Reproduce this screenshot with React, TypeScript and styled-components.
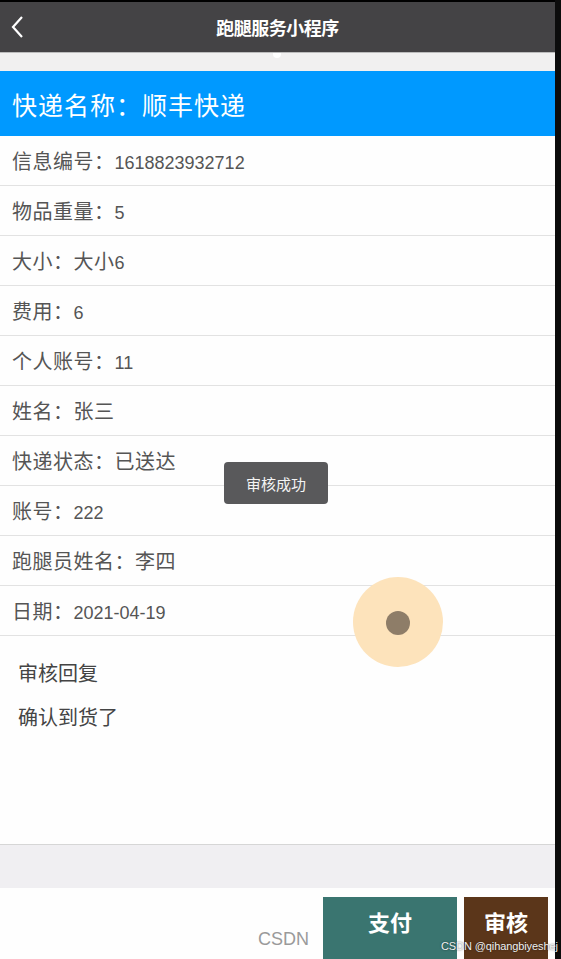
import styled, { createGlobalStyle } from "styled-components";

const GlobalStyle = createGlobalStyle`
  *, *::before, *::after {
    box-sizing: border-box;
  }
  html, body {
    margin: 0;
    padding: 0;
    background: #000;
  }
  body {
    font-family: "Liberation Sans", "Noto Sans CJK SC", sans-serif;
  }
`;

interface InfoItem {
  label: string;
  value: string;
}

const items: InfoItem[] = [
  { label: "信息编号", value: "1618823932712" },
  { label: "物品重量", value: "5" },
  { label: "大小", value: "大小6" },
  { label: "费用", value: "6" },
  { label: "个人账号", value: "11" },
  { label: "姓名", value: "张三" },
  { label: "快递状态", value: "已送达" },
  { label: "账号", value: "222" },
  { label: "跑腿员姓名", value: "李四" },
  { label: "日期", value: "2021-04-19" },
];

// split a string into CJK / latin runs so the two scripts get their own size
const toRuns = (text: string) =>
  text.match(/[\u3000-\u9fff\uff00-\uffef]+|[^\u3000-\u9fff\uff00-\uffef]+/g) ?? [];

const isCjk = (run: string) => /[\u3000-\u9fff\uff00-\uffef]/.test(run);

// --- Styled Components ---
const Screen = styled.div`
  position: relative;
  width: 561px;
  height: 959px;
  overflow: hidden;
  display: flex;
  background: #000;
`;

const Phone = styled.div`
  width: 555px;
  margin-top: 2px;
  display: flex;
  flex-direction: column;
  background: #fefefe;

  & > * {
    flex-shrink: 0;
  }
`;

const NavBar = styled.div`
  height: 51px;
  background: #444345;
  display: flex;
  align-items: center;
  justify-content: center;
  position: relative;
  border-bottom: 1px solid #bcbcbc;
`;

const BackButton = styled.div`
  position: absolute;
  left: 10px;
  top: 13px;
  width: 16px;
  height: 24px;
  display: flex;
`;

const NavTitle = styled.div`
  color: #fff;
  font-size: 18px;
  font-weight: 700;
  letter-spacing: -0.5px;
`;

const Strip = styled.div`
  height: 18px;
  background: #f1f0f0;
  display: flex;
  justify-content: center;
`;

const Dot = styled.div`
  width: 8px;
  height: 5px;
  border-radius: 0 0 4px 4px;
  background: #fff;
  margin-left: -2px;
`;

const Banner = styled.div`
  height: 65px;
  background: #0099ff;
  display: flex;
  align-items: center;
  padding-left: 12px;
  color: #fff;
  font-size: 25px;
  letter-spacing: 1px;
`;

const Row = styled.div`
  height: 50px;
  border-bottom: 1px solid #e2e2e2;
  display: flex;
  align-items: center;
  padding-left: 12px;
  color: #555;
`;

const Run = styled.span<{ $cjk: boolean }>`
  font-size: ${(p) => (p.$cjk ? "20px" : "18px")};
  letter-spacing: ${(p) => (p.$cjk ? "0.5px" : "0")};
`;

const Reply = styled.div`
  height: 209px;
  padding: 22px 18px 0;
  display: flex;
  flex-direction: column;
  gap: 15px;
  border-bottom: 1px solid #d6d6d6;
  font-size: 20px;
  color: #444;
`;

const GrayBand = styled.div`
  height: 43px;
  background: #f0eff2;
`;

const ActionBar = styled.div`
  flex: 1;
  display: flex;
  align-items: flex-start;
  padding-top: 9px;
  background: #fefefe;
`;

const Csdn = styled.div`
  margin-left: 258px;
  margin-top: 32px;
  font-size: 18px;
  color: #9a9a9a;
  width: 65px;
`;

const ActionButton = styled.div<{ $bg: string; $w: number }>`
  width: ${(p) => p.$w}px;
  height: 70px;
  background: ${(p) => p.$bg};
  color: #fff;
  font-size: 22px;
  font-weight: 700;
  display: flex;
  justify-content: center;
  padding-top: 8px;
  margin-right: 7px;
`;

const RightEdge = styled.div`
  width: 6px;
  background: #0c0c0c;
`;

const Toast = styled.div`
  position: absolute;
  left: 224px;
  top: 462px;
  width: 104px;
  height: 42px;
  border-radius: 4px;
  background: #59595b;
  color: #f4f4f4;
  font-size: 15px;
  display: flex;
  align-items: center;
  justify-content: center;
`;

const TapRing = styled.div`
  position: absolute;
  left: 353px;
  top: 577px;
  width: 90px;
  height: 90px;
  border-radius: 50%;
  background: #fde3bb;
  display: flex;
  align-items: center;
  justify-content: center;
`;

const TapDot = styled.div`
  width: 24px;
  height: 24px;
  border-radius: 50%;
  background: #8e7d68;
  margin-top: 1px;
`;

const Watermark = styled.div`
  position: absolute;
  left: 441px;
  top: 940px;
  font-size: 11px;
  letter-spacing: -0.1px;
  color: #f0f0f0;
  text-shadow: 0 0 2px rgba(0, 0, 0, 0.6);
  white-space: nowrap;
`;

function App() {
  return (
    <>
      <GlobalStyle />
      <Screen>
        <Phone>
          <NavBar>
            <BackButton>
              <svg width="16" height="24" viewBox="0 0 16 24">
                <path d="M12 2 L3 12 L12 22" fill="none" stroke="#fff" strokeWidth="2.2" />
              </svg>
            </BackButton>
            <NavTitle>跑腿服务小程序</NavTitle>
          </NavBar>
          <Strip>
            <Dot />
          </Strip>
          <Banner>快递名称：顺丰快递</Banner>
          {items.map((item) => (
            <Row key={item.label}>
              <div>
                {toRuns(`${item.label}：${item.value}`).map((run, i) => (
                  <Run key={i} $cjk={isCjk(run)}>
                    {run}
                  </Run>
                ))}
              </div>
            </Row>
          ))}
          <Reply>
            <div>审核回复</div>
            <div>确认到货了</div>
          </Reply>
          <GrayBand />
          <ActionBar>
            <Csdn>CSDN</Csdn>
            <ActionButton $bg="#3a7570" $w={134}>支付</ActionButton>
            <ActionButton $bg="#5b361a" $w={84}>审核</ActionButton>
          </ActionBar>
        </Phone>
        <RightEdge />
        <Toast>审核成功</Toast>
        <TapRing>
          <TapDot />
        </TapRing>
        <Watermark>CSDN @qihangbiyeshej</Watermark>
      </Screen>
    </>
  );
}

export default App;
